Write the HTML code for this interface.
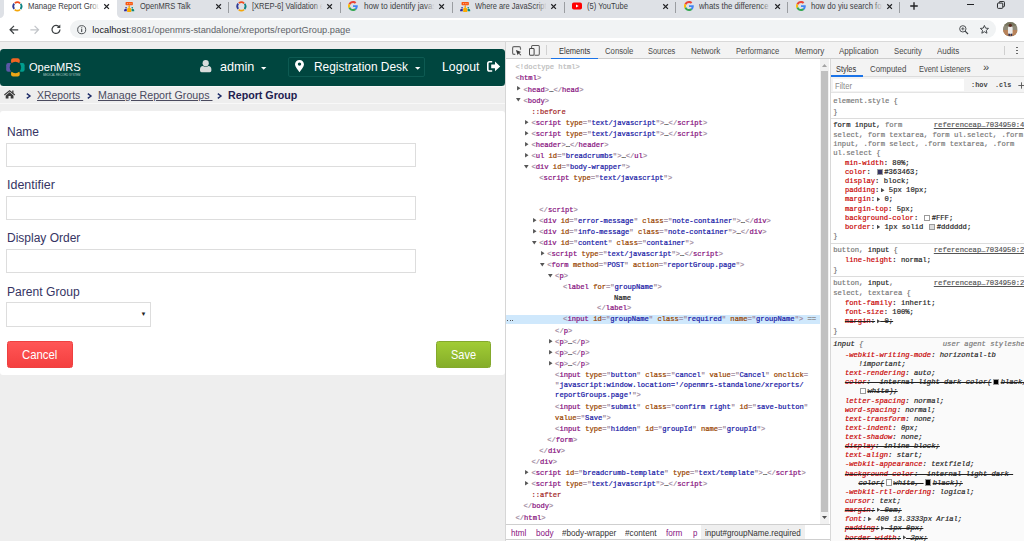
<!DOCTYPE html>
<html lang="en"><head><meta charset="utf-8"><title>Manage Report Groups</title>
<style>
*{box-sizing:border-box;margin:0;padding:0}
html,body{width:1024px;height:541px;overflow:hidden;background:#fff}
body{position:relative;font-family:"Liberation Sans",Arial,sans-serif;color:#333}
.abs{position:absolute}
.t{position:absolute;white-space:pre;line-height:1}
/* ---------- browser chrome ---------- */
#tabstrip{left:0;top:0;width:1024px;height:18px;background:#dee1e6}
#acttab{left:3.8px;top:0;width:113.3px;height:18px;background:#fff}
.foot{width:5px;height:5px;background:#fff;top:12.6px}
.foot i{display:block;width:5px;height:5px;background:#dee1e6}
.tabt{font-size:8.1px;letter-spacing:-0.2px;color:#3c4043;top:2.9px;overflow:hidden}
.tabx{font-size:9px;color:#202124;top:3.5px;font-weight:bold}
.tsep{top:1.6px;width:1px;height:11px;background:#9a9da1}
#toolbar{left:0;top:17.5px;width:1024px;height:23px;background:#fff}
#omni{left:70px;top:20.4px;width:926px;height:17.7px;border-radius:9px;background:#f1f3f4}
#url{left:92.2px;top:26px;font-size:9.25px;color:#5f6368}
#url b{font-weight:normal;color:#202124}
#tbline{left:0;top:40.5px;width:1024px;height:1px;background:#d9d9d9}
/* ---------- page ---------- */
#pagebg{left:0;top:41.5px;width:505px;height:500px;background:#eeeeee}
#hdr{left:0;top:48.7px;width:505.3px;height:37px;background:#00463f;border-radius:3.5px}
.hw{color:#fff}
#crumbs{left:0;top:86.2px;width:505px;height:17.8px;background:#eeeeee;border-top:1px solid #f8f8f8;border-bottom:1px solid #f8f8f8}
.cr{font-size:11.7px;color:#363463;top:89.6px}
.cr.u{text-decoration:underline;color:#4a4a5e}
#content{left:0;top:111px;width:505.3px;height:263.6px;background:#fff;border-radius:3px}
.lbl{font-size:12px;color:#363463;left:7px}
.inp{left:6px;width:410px;height:24px;border:1px solid #ddd;background:#fff}
.btn{top:341.2px;height:26.4px;border-radius:2.5px;color:#fff;font-size:12.6px;text-align:center;line-height:26px}
#cancel{left:6.5px;width:66px;background:linear-gradient(#ff5656,#f43f3f);border:1px solid #ee4040}
#save{left:436.2px;width:55px;background:linear-gradient(#a1cc35,#85ad29);border:1px solid #84a92c}
#pgedge{left:505.3px;top:41.5px;width:1px;height:500px;background:#d6d6d6}

.fade{position:absolute;top:0px;width:12px;height:14px}
svg{position:absolute;overflow:visible}

.hd{font-size:12px;color:#fff;top:61.2px}
#regbox{left:288.4px;top:56.6px;width:136.2px;height:20.2px;border:1px solid #0d5a52;border-radius:2px}

#dtbar{left:506px;top:41.5px;width:518px;height:17px;background:#f3f3f3;border-bottom:1px solid #cdcdcd}
#dtleft{left:505.3px;top:41.5px;width:1px;height:500px;background:#d6d6d6}
#stbar{left:830.5px;top:59px;width:194px;height:17.6px;background:#f3f3f3;border-bottom:1px solid #dcdcdc}
#stfilt{left:830.5px;top:76.6px;width:194px;height:16.8px;background:#f3f3f3;border-bottom:1px solid #e4e4e4}
#stinp{left:832.6px;top:78.8px;width:131.6px;height:12.6px;background:#fff}
#split{left:829.6px;top:59px;width:1px;height:482px;background:#d8d8d8}
#sbtrack{left:820.4px;top:59px;width:8.6px;height:465.6px;background:#f1f1f1}
#sbthumb{left:821px;top:70.6px;width:7.4px;height:441.4px;background:#c1c1c1}
#elcr{left:506px;top:523.9px;width:323.6px;height:15.9px;background:#fff;border-top:1px solid #cfcfcf;border-bottom:1px solid #cfcfcf}
#elcrsel{left:700.5px;top:525.1px;width:104.4px;height:13.6px;background:#efefef}
.mono{font-family:"Liberation Mono",monospace}

.ln{position:absolute;white-space:pre;font-family:"Liberation Mono",monospace;font-size:7.155px;line-height:11px;height:11px;color:#222;-webkit-text-stroke:0.22px currentColor}
.ln i{font-style:normal}
.b{color:#a08a9e}.tg{color:#881280}.an{color:#994500}.av{color:#1a1aa6}.dc{color:#bdbdbd}.ps{color:#a52a2a}.gy{color:#8a8a8a}
#selrow{left:506px;top:314.5px;width:314.4px;height:9.8px;background:#cfe8fc}
#treeclip{left:506px;top:59px;width:314.4px;height:465.6px;overflow:hidden}

#stclip{left:830.5px;top:93px;width:193.5px;height:448px;overflow:hidden;background:#fff}
.sl{position:absolute;white-space:pre;font-family:"Liberation Mono",monospace;font-size:7.19px;line-height:9.2px;height:9.2px;color:#222;-webkit-text-stroke:0.18px currentColor}
.sl.it{font-style:italic}
.pn{color:#c80000}.sg{color:#777}.sm{color:#222}.lk{color:#555;text-decoration:underline;text-decoration-thickness:0.6px}
.st{text-decoration:line-through;text-decoration-color:#222;text-decoration-thickness:0.7px}
.sw{display:inline-block;width:6.2px;height:6.2px;border:0.7px solid #9a9a9a;vertical-align:-0.9px;margin:0 1.5px 0 1.4px}
.tri{display:inline-block;width:3.5px;height:4.6px;background:#4a4a4a;clip-path:polygon(0 0,100% 50%,0 100%);margin:0 0 0 1.6px;vertical-align:-0.2px}
.sep{position:absolute;left:0;width:194px;height:1px;background:#dcdcdc}
#uabg{left:0;top:244.6px;width:194px;height:210px;background:#fafafa}
</style></head>
<body>

<div id="tabstrip" class="abs"></div>
<div id="acttab" class="abs"></div><div class="abs foot" style="left:117.1px"><i style="border-bottom-left-radius:4.5px"></i></div><div class="abs foot" style="left:-1.2px"><i style="border-bottom-right-radius:4.5px"></i></div>
<div id="toolbar" class="abs"></div>
<div id="omni" class="abs"></div>
<div id="tbline" class="abs"></div>
<div id="url" class="t"><b>localhost</b>:8081/openmrs-standalone/xreports/reportGroup.page</div>

<div id="pagebg" class="abs"></div>
<div id="hdr" class="abs"></div>
<div id="crumbs" class="abs"></div>
<div id="content" class="abs"></div>
<div id="pgedge" class="abs"></div>
<div class="t" style="left:6.6px;top:126.00px;font-size:12px;color:#363463;transform:scaleX(0.9997);transform-origin:0 50%;">Name</div>
<div class="abs inp" style="top:143px"></div>
<div class="t" style="left:6.6px;top:178.80px;font-size:12px;color:#363463;transform:scaleX(1.0386);transform-origin:0 50%;">Identifier</div>
<div class="abs inp" style="top:196.2px"></div>
<div class="t" style="left:6.6px;top:232.40px;font-size:12px;color:#363463;transform:scaleX(0.9993);transform-origin:0 50%;">Display Order</div>
<div class="abs inp" style="top:248.8px"></div>
<div class="t" style="left:6.6px;top:285.50px;font-size:12px;color:#363463;transform:scaleX(1.0078);transform-origin:0 50%;">Parent Group</div>
<div class="abs inp" style="top:302px;width:145.2px;height:25px"></div>
<div class="t" style="left:140.5px;top:311px;font-size:6px;color:#222">&#9660;</div>
<div id="cancel" class="abs btn"></div><div class="t" style="left:21.8px;top:348.50px;font-size:12.2px;color:#fff;transform:scaleX(0.9295);transform-origin:0 50%;">Cancel</div>
<div id="save" class="abs btn"></div><div class="t" style="left:451.2px;top:348.50px;font-size:12.2px;color:#fff;transform:scaleX(0.8990);transform-origin:0 50%;">Save</div>
<svg style="left:12.0px;top:1.1px" width="10.8" height="10.8" viewBox="0 0 10 10"><circle cx="5" cy="5" r="3.85" fill="none" stroke="#f04a1c" stroke-width="1.55" stroke-dasharray="5.20 18.99" transform="rotate(-129 5 5)"/><circle cx="5" cy="5" r="3.85" fill="none" stroke="#0c8282" stroke-width="1.55" stroke-dasharray="5.20 18.99" transform="rotate(-39 5 5)"/><circle cx="5" cy="5" r="3.85" fill="none" stroke="#f4a60a" stroke-width="1.55" stroke-dasharray="5.20 18.99" transform="rotate(51 5 5)"/><circle cx="5" cy="5" r="3.85" fill="none" stroke="#2f3a96" stroke-width="1.55" stroke-dasharray="5.20 18.99" transform="rotate(141 5 5)"/></svg><div class="abs" style="left:27.8px;top:0;width:74px;height:17px;overflow:hidden"><div class="t" style="left:0;top:1.9px;font-size:8.8px;color:#3c4043;transform:scaleX(0.8820);transform-origin:0 50%">Manage Report Groups</div></div><div class="fade" style="left:89.5px;background:linear-gradient(90deg,rgba(255,255,255,0),rgba(255,255,255,1) 80%)"></div><svg style="left:103.7px;top:3.9px" width="5.2" height="5.2" viewBox="0 0 10 10"><path d="M0.5 0.5 L9.5 9.5 M9.5 0.5 L0.5 9.5" stroke="#202124" stroke-width="2.3" fill="none"/></svg><svg style="left:124.3px;top:1.7px" width="10.3" height="10.3" viewBox="0 0 10 10"><rect x="1.5" y="0" width="7.1" height="3.2" rx="0.7" fill="#f9560e"/><circle cx="3.3" cy="1.65" r="0.45" fill="#fff"/><circle cx="5.05" cy="1.65" r="0.45" fill="#fff"/><circle cx="6.8" cy="1.65" r="0.45" fill="#fff"/><rect x="4.7" y="3.1" width="0.7" height="1.2" fill="#f9560e"/><circle cx="2.0" cy="5.7" r="0.8" fill="#2e2a9a"/><path d="M0.1 9.1 V7.9 Q0.1 6.7 1.3 6.7 H2.7 V9.1 Z" fill="#2e2a9a"/><circle cx="8.0" cy="5.7" r="0.8" fill="#0b8a7a"/><path d="M9.9 9.1 V7.9 Q9.9 6.7 8.7 6.7 H7.3 V9.1 Z" fill="#0b8a7a"/><circle cx="5.05" cy="4.9" r="0.9" fill="#fbab00"/><path d="M3.1 9.7 V7 Q3.1 5.9 4.2 5.9 H5.9 Q7 5.9 7 7 V9.7 Z" fill="#fbab00"/></svg><div class="abs" style="left:139.8px;top:0;width:74px;height:17px;overflow:hidden"><div class="t" style="left:0;top:1.9px;font-size:8.8px;color:#3c4043;transform:scaleX(0.8574);transform-origin:0 50%">OpenMRS Talk</div></div><svg style="left:215.6px;top:3.9px" width="5.2" height="5.2" viewBox="0 0 10 10"><path d="M0.5 0.5 L9.5 9.5 M9.5 0.5 L0.5 9.5" stroke="#202124" stroke-width="2.3" fill="none"/></svg><div class="abs tsep" style="left:227.8px"></div><svg style="left:235.8px;top:1.1px" width="10.8" height="10.8" viewBox="0 0 10 10"><circle cx="5" cy="5" r="3.85" fill="none" stroke="#f04a1c" stroke-width="1.55" stroke-dasharray="5.20 18.99" transform="rotate(-129 5 5)"/><circle cx="5" cy="5" r="3.85" fill="none" stroke="#0c8282" stroke-width="1.55" stroke-dasharray="5.20 18.99" transform="rotate(-39 5 5)"/><circle cx="5" cy="5" r="3.85" fill="none" stroke="#f4a60a" stroke-width="1.55" stroke-dasharray="5.20 18.99" transform="rotate(51 5 5)"/><circle cx="5" cy="5" r="3.85" fill="none" stroke="#2f3a96" stroke-width="1.55" stroke-dasharray="5.20 18.99" transform="rotate(141 5 5)"/></svg><div class="abs" style="left:251.7px;top:0;width:74px;height:17px;overflow:hidden"><div class="t" style="left:0;top:1.9px;font-size:8.8px;color:#3c4043;transform:scaleX(0.8558);transform-origin:0 50%">[XREP-6] Validation e</div></div><div class="fade" style="left:313.2px;background:linear-gradient(90deg,rgba(222,225,230,0),rgba(222,225,230,1) 80%)"></div><svg style="left:327.4px;top:3.9px" width="5.2" height="5.2" viewBox="0 0 10 10"><path d="M0.5 0.5 L9.5 9.5 M9.5 0.5 L0.5 9.5" stroke="#202124" stroke-width="2.3" fill="none"/></svg><div class="abs tsep" style="left:339.6px"></div><svg style="left:348.4px;top:1.2px" width="10" height="10" viewBox="0 0 48 48"><path fill="#EA4335" d="M24 9.5c3.54 0 6.71 1.22 9.21 3.6l6.85-6.85C35.9 2.38 30.47 0 24 0 14.62 0 6.51 5.38 2.56 13.22l7.98 6.19C12.43 13.72 17.74 9.5 24 9.5z"/><path fill="#4285F4" d="M46.98 24.55c0-1.57-.15-3.09-.38-4.55H24v9.02h12.94c-.58 2.96-2.26 5.48-4.78 7.18l7.73 6c4.51-4.18 7.09-10.36 7.09-17.65z"/><path fill="#FBBC05" d="M10.53 28.59c-.48-1.45-.76-2.99-.76-4.59s.27-3.14.76-4.59l-7.98-6.19C.92 16.46 0 20.12 0 24c0 3.88.92 7.54 2.56 10.78l7.97-6.19z"/><path fill="#34A853" d="M24 48c6.48 0 11.93-2.13 15.89-5.81l-7.73-6c-2.15 1.45-4.92 2.3-8.16 2.3-6.26 0-11.57-4.22-13.47-9.91l-7.98 6.19C6.51 42.62 14.62 48 24 48z"/></svg><div class="abs" style="left:363.6px;top:0;width:74px;height:17px;overflow:hidden"><div class="t" style="left:0;top:1.9px;font-size:8.8px;color:#3c4043;transform:scaleX(0.9152);transform-origin:0 50%">how to identify javas</div></div><div class="fade" style="left:425.2px;background:linear-gradient(90deg,rgba(222,225,230,0),rgba(222,225,230,1) 80%)"></div><svg style="left:439.4px;top:3.9px" width="5.2" height="5.2" viewBox="0 0 10 10"><path d="M0.5 0.5 L9.5 9.5 M9.5 0.5 L0.5 9.5" stroke="#202124" stroke-width="2.3" fill="none"/></svg><div class="abs tsep" style="left:451.6px"></div><svg style="left:459.9px;top:1.7px" width="10.3" height="10.3" viewBox="0 0 10 10"><rect x="1.5" y="0" width="7.1" height="3.2" rx="0.7" fill="#f9560e"/><circle cx="3.3" cy="1.65" r="0.45" fill="#fff"/><circle cx="5.05" cy="1.65" r="0.45" fill="#fff"/><circle cx="6.8" cy="1.65" r="0.45" fill="#fff"/><rect x="4.7" y="3.1" width="0.7" height="1.2" fill="#f9560e"/><circle cx="2.0" cy="5.7" r="0.8" fill="#2e2a9a"/><path d="M0.1 9.1 V7.9 Q0.1 6.7 1.3 6.7 H2.7 V9.1 Z" fill="#2e2a9a"/><circle cx="8.0" cy="5.7" r="0.8" fill="#0b8a7a"/><path d="M9.9 9.1 V7.9 Q9.9 6.7 8.7 6.7 H7.3 V9.1 Z" fill="#0b8a7a"/><circle cx="5.05" cy="4.9" r="0.9" fill="#fbab00"/><path d="M3.1 9.7 V7 Q3.1 5.9 4.2 5.9 H5.9 Q7 5.9 7 7 V9.7 Z" fill="#fbab00"/></svg><div class="abs" style="left:475.4px;top:0;width:74px;height:17px;overflow:hidden"><div class="t" style="left:0;top:1.9px;font-size:8.8px;color:#3c4043;transform:scaleX(0.8458);transform-origin:0 50%">Where are JavaScript</div></div><div class="fade" style="left:537.0px;background:linear-gradient(90deg,rgba(222,225,230,0),rgba(222,225,230,1) 80%)"></div><svg style="left:551.2px;top:3.9px" width="5.2" height="5.2" viewBox="0 0 10 10"><path d="M0.5 0.5 L9.5 9.5 M9.5 0.5 L0.5 9.5" stroke="#202124" stroke-width="2.3" fill="none"/></svg><div class="abs tsep" style="left:563.5px"></div><svg style="left:572.2px;top:1.2px" width="10" height="10" viewBox="0 0 10 10"><rect x="0" y="1.5" width="10" height="7" rx="1.8" fill="#ff0000"/><path d="M4 3.4 L6.7 5 L4 6.6 Z" fill="#fff"/></svg><div class="abs" style="left:587.4px;top:0;width:74px;height:17px;overflow:hidden"><div class="t" style="left:0;top:1.9px;font-size:8.8px;color:#3c4043;transform:scaleX(0.8609);transform-origin:0 50%">(5) YouTube</div></div><svg style="left:663.1px;top:3.9px" width="5.2" height="5.2" viewBox="0 0 10 10"><path d="M0.5 0.5 L9.5 9.5 M9.5 0.5 L0.5 9.5" stroke="#202124" stroke-width="2.3" fill="none"/></svg><div class="abs tsep" style="left:675.4px"></div><svg style="left:684.1px;top:1.2px" width="10" height="10" viewBox="0 0 48 48"><path fill="#EA4335" d="M24 9.5c3.54 0 6.71 1.22 9.21 3.6l6.85-6.85C35.9 2.38 30.47 0 24 0 14.62 0 6.51 5.38 2.56 13.22l7.98 6.19C12.43 13.72 17.74 9.5 24 9.5z"/><path fill="#4285F4" d="M46.98 24.55c0-1.57-.15-3.09-.38-4.55H24v9.02h12.94c-.58 2.96-2.26 5.48-4.78 7.18l7.73 6c4.51-4.18 7.09-10.36 7.09-17.65z"/><path fill="#FBBC05" d="M10.53 28.59c-.48-1.45-.76-2.99-.76-4.59s.27-3.14.76-4.59l-7.98-6.19C.92 16.46 0 20.12 0 24c0 3.88.92 7.54 2.56 10.78l7.97-6.19z"/><path fill="#34A853" d="M24 48c6.48 0 11.93-2.13 15.89-5.81l-7.73-6c-2.15 1.45-4.92 2.3-8.16 2.3-6.26 0-11.57-4.22-13.47-9.91l-7.98 6.19C6.51 42.62 14.62 48 24 48z"/></svg><div class="abs" style="left:699.3px;top:0;width:74px;height:17px;overflow:hidden"><div class="t" style="left:0;top:1.9px;font-size:8.8px;color:#3c4043;transform:scaleX(0.8842);transform-origin:0 50%">whats the difference b</div></div><div class="fade" style="left:760.9px;background:linear-gradient(90deg,rgba(222,225,230,0),rgba(222,225,230,1) 80%)"></div><svg style="left:775.1px;top:3.9px" width="5.2" height="5.2" viewBox="0 0 10 10"><path d="M0.5 0.5 L9.5 9.5 M9.5 0.5 L0.5 9.5" stroke="#202124" stroke-width="2.3" fill="none"/></svg><div class="abs tsep" style="left:787.3px"></div><svg style="left:796.0px;top:1.2px" width="10" height="10" viewBox="0 0 48 48"><path fill="#EA4335" d="M24 9.5c3.54 0 6.71 1.22 9.21 3.6l6.85-6.85C35.9 2.38 30.47 0 24 0 14.62 0 6.51 5.38 2.56 13.22l7.98 6.19C12.43 13.72 17.74 9.5 24 9.5z"/><path fill="#4285F4" d="M46.98 24.55c0-1.57-.15-3.09-.38-4.55H24v9.02h12.94c-.58 2.96-2.26 5.48-4.78 7.18l7.73 6c4.51-4.18 7.09-10.36 7.09-17.65z"/><path fill="#FBBC05" d="M10.53 28.59c-.48-1.45-.76-2.99-.76-4.59s.27-3.14.76-4.59l-7.98-6.19C.92 16.46 0 20.12 0 24c0 3.88.92 7.54 2.56 10.78l7.97-6.19z"/><path fill="#34A853" d="M24 48c6.48 0 11.93-2.13 15.89-5.81l-7.73-6c-2.15 1.45-4.92 2.3-8.16 2.3-6.26 0-11.57-4.22-13.47-9.91l-7.98 6.19C6.51 42.62 14.62 48 24 48z"/></svg><div class="abs" style="left:811.2px;top:0;width:74px;height:17px;overflow:hidden"><div class="t" style="left:0;top:1.9px;font-size:8.8px;color:#3c4043;transform:scaleX(0.8735);transform-origin:0 50%">how do yiu search for</div></div><div class="fade" style="left:872.8px;background:linear-gradient(90deg,rgba(222,225,230,0),rgba(222,225,230,1) 80%)"></div><svg style="left:887.0px;top:3.9px" width="5.2" height="5.2" viewBox="0 0 10 10"><path d="M0.5 0.5 L9.5 9.5 M9.5 0.5 L0.5 9.5" stroke="#202124" stroke-width="2.3" fill="none"/></svg><div class="abs tsep" style="left:899.2px"></div><svg style="left:910.3px;top:2.4px" width="8" height="8" viewBox="0 0 10 10"><path d="M5 0.3 V9.7 M0.3 5 H9.7" stroke="#202124" stroke-width="1.7" fill="none"/></svg><div class="abs" style="left:967px;top:4.3px;width:7.4px;height:1px;background:#202124"></div><svg style="left:997px;top:0.6px" width="8" height="8" viewBox="0 0 10 10"><rect x="0.6" y="2.6" width="6.6" height="6.6" rx="1" fill="#dee1e6" stroke="#202124" stroke-width="1.2"/><path d="M2.8 2.4 V1.6 Q2.8 0.7 3.8 0.7 H8.3 Q9.3 0.7 9.3 1.7 V6.2 Q9.3 7.2 8.3 7.2 H7.4" fill="none" stroke="#202124" stroke-width="1.2"/></svg><svg style="left:9px;top:24.5px" width="9.6" height="9.6" viewBox="0 0 10 10"><path d="M9.6 5 H1.4 M5.2 0.9 L1.1 5 L5.2 9.1" stroke="#3c4043" stroke-width="1.25" fill="none"/></svg><svg style="left:29.8px;top:24.5px" width="9.6" height="9.6" viewBox="0 0 10 10"><path d="M0.4 5 H8.6 M4.8 0.9 L8.9 5 L4.8 9.1" stroke="#c2c5c9" stroke-width="1.25" fill="none"/></svg><svg style="left:50.6px;top:24.2px" width="10" height="10" viewBox="0 0 10 10"><path d="M8.3 3.2 A4 4 0 1 0 9 5.6" stroke="#3c4043" stroke-width="1.25" fill="none"/><path d="M9.3 0.6 V4.1 H5.8 Z" fill="#3c4043"/></svg><svg style="left:76.6px;top:24.6px" width="9.4" height="9.4" viewBox="0 0 10 10"><circle cx="5" cy="5" r="4.3" fill="none" stroke="#3c4043" stroke-width="0.95"/><rect x="4.45" y="4.3" width="1.1" height="3.2" fill="#3c4043"/><rect x="4.45" y="2.5" width="1.1" height="1.1" fill="#3c4043"/></svg><svg style="left:958.6px;top:24.6px" width="9.6" height="9.6" viewBox="0 0 10 10"><circle cx="4" cy="4" r="3.3" fill="none" stroke="#3c4043" stroke-width="0.95"/><path d="M6.4 6.4 L9.4 9.4" stroke="#3c4043" stroke-width="1.2"/><path d="M2.3 4 H5.7 M4 2.3 V5.7" stroke="#3c4043" stroke-width="0.8"/></svg><svg style="left:979px;top:23.9px" width="10.8" height="10.8" viewBox="0 0 24 24"><path d="M12 3.2 L14.6 9.2 L21.1 9.8 L16.2 14.1 L17.7 20.5 L12 17.1 L6.3 20.5 L7.8 14.1 L2.9 9.8 L9.4 9.2 Z" fill="none" stroke="#3c4043" stroke-width="2.1" stroke-linejoin="round"/></svg><svg style="left:1002.6px;top:21.8px" width="14.6" height="14.6" viewBox="0 0 20 20"><defs><clipPath id="av"><circle cx="10" cy="10" r="10"/></clipPath></defs><g clip-path="url(#av)"><rect width="20" height="20" fill="#8f8a78"/><rect y="11" width="20" height="9" fill="#b9835a"/><rect x="0" y="0" width="20" height="5" fill="#77765f"/><rect x="6.8" y="6.5" width="6.4" height="10" rx="1.5" fill="#ecebea"/><circle cx="10" cy="4.6" r="2.2" fill="#5a2c22"/><rect x="7.5" y="16" width="2" height="3" fill="#27305a"/><rect x="10.5" y="16" width="2" height="3" fill="#27305a"/></g></svg><svg style="left:6.2px;top:57.8px" width="18.8" height="18.8" viewBox="0 0 20 20"><rect x="5.4" y="0.2" width="9.2" height="6" rx="2.2" fill="#f26522"/><rect x="13.8" y="5.4" width="6" height="9.2" rx="2.2" fill="#009d8e"/><rect x="5.4" y="13.8" width="9.2" height="6" rx="2.2" fill="#eea616"/><rect x="0.2" y="5.4" width="6" height="9.2" rx="2.2" fill="#5b57a6"/><circle cx="10" cy="10" r="6.1" fill="#00463f"/></svg><div class="t" style="left:28.7px;top:61.60px;font-size:11.4px;color:#fff;transform:scaleX(0.9733);transform-origin:0 50%;">OpenMRS</div><div class="t" style="left:42.5px;top:74.90px;font-size:2.6px;color:#b5ccc8;transform:scaleX(1.0756);transform-origin:0 50%;">MEDICAL RECORD SYSTEM</div><svg style="left:199.8px;top:60.2px" width="11.4" height="12.2" viewBox="0 0 11.4 12.2"><circle cx="5.7" cy="3.2" r="3.1" fill="#d9dcdb"/><path d="M0 10.6 V9.4 Q0 6.1 3 5.9 Q5.7 7.6 8.4 5.9 Q11.4 6.1 11.4 9.4 V10.6 Q11.4 12.2 9.8 12.2 H1.6 Q0 12.2 0 10.6 Z" fill="#d9dcdb"/></svg><div class="t" style="left:219.8px;top:60.90px;font-size:12.2px;color:#fff;transform:scaleX(1.0352);transform-origin:0 50%;">admin</div><svg style="left:261px;top:67.4px" width="5.4" height="2.7" viewBox="0 0 10 5"><path d="M0 0 H10 L5 5 Z" fill="#fff"/></svg><div id="regbox" class="abs"></div><svg style="left:295.2px;top:60.4px" width="9" height="12.2" viewBox="0 0 9 12.2"><path d="M4.5 0 C7 0 9 1.9 9 4.4 C9 6.8 6.2 9.6 4.5 12.2 C2.8 9.6 0 6.8 0 4.4 C0 1.9 2 0 4.5 0 Z" fill="#fff"/><circle cx="4.5" cy="4.1" r="1.7" fill="#00463f"/></svg><div class="t" style="left:314.0px;top:61.00px;font-size:12px;color:#fff;transform:scaleX(0.9925);transform-origin:0 50%;">Registration Desk</div><svg style="left:415.2px;top:67.4px" width="5.4" height="2.7" viewBox="0 0 10 5"><path d="M0 0 H10 L5 5 Z" fill="#fff"/></svg><div class="t" style="left:442.1px;top:61.00px;font-size:12px;color:#fff;transform:scaleX(1.0217);transform-origin:0 50%;">Logout</div><svg style="left:487.2px;top:61px" width="13.2" height="10.8" viewBox="0 0 13.2 10.8"><path d="M5.2 0.8 H2.6 Q0.8 0.8 0.8 2.6 V8.2 Q0.8 10 2.6 10 H5.2" fill="none" stroke="#fff" stroke-width="1.6"/><path d="M4.2 3.6 H8 V0.6 L13.2 5.4 L8 10.2 V7.2 H4.2 Z" fill="#fff"/></svg><svg style="left:4px;top:90.4px" width="11.2" height="8.6" viewBox="0 0 11.2 8.6"><path d="M5.6 0 L11.2 4.6 L10.5 5.4 L5.6 1.4 L0.7 5.4 L0 4.6 Z" fill="#3a3a3a"/><path d="M5.6 2.3 L9.5 5.5 V8.6 H6.7 V6 H4.5 V8.6 H1.7 V5.5 Z" fill="#3a3a3a"/><rect x="8.2" y="0.5" width="1.3" height="2.6" fill="#3a3a3a"/></svg><svg style="left:25.8px;top:93.3px" width="5" height="6" viewBox="0 0 5 6"><path d="M0.8 0.6 L4 3 L0.8 5.4" fill="none" stroke="#1b2a66" stroke-width="1.4"/></svg><div class="t" style="left:37.0px;top:89.85px;font-size:10.9px;color:#4a4a5e;transform:scaleX(0.9532);transform-origin:0 50%;text-decoration:underline;">XReports </div><svg style="left:87.2px;top:93.3px" width="5" height="6" viewBox="0 0 5 6"><path d="M0.8 0.6 L4 3 L0.8 5.4" fill="none" stroke="#1b2a66" stroke-width="1.4"/></svg><div class="t" style="left:98.4px;top:89.85px;font-size:10.9px;color:#4a4a5e;transform:scaleX(0.9800);transform-origin:0 50%;text-decoration:underline;">Manage Report Groups </div><svg style="left:216.8px;top:93.3px" width="5" height="6" viewBox="0 0 5 6"><path d="M0.8 0.6 L4 3 L0.8 5.4" fill="none" stroke="#1b2a66" stroke-width="1.4"/></svg><div class="t" style="left:228.4px;top:89.85px;font-size:10.9px;color:#22204f;transform:scaleX(0.9796);transform-origin:0 50%;font-weight:700;">Report Group</div><div id="dtbar" class="abs"></div><div id="stbar" class="abs"></div><div id="stfilt" class="abs"></div><div id="stinp" class="abs"></div><div id="split" class="abs"></div><div id="sbtrack" class="abs"></div><div id="sbthumb" class="abs"></div><svg style="left:822.2px;top:64.1px" width="5" height="3" viewBox="0 0 10 6"><path d="M0 6 L5 0 L10 6 Z" fill="#a3a3a3"/></svg><svg style="left:822.2px;top:516.2px" width="5" height="3" viewBox="0 0 10 6"><path d="M0 0 L5 6 L10 0 Z" fill="#505050"/></svg><div id="elcr" class="abs"></div><div id="elcrsel" class="abs"></div><svg style="left:512.2px;top:45.6px" width="10" height="10" viewBox="0 0 10 10"><path d="M8.5 3.7 V2 Q8.5 0.6 7.1 0.6 H2 Q0.6 0.6 0.6 2 V7 Q0.6 8.4 2 8.4 H3.3" fill="none" stroke="#6a6a6a" stroke-width="1.15"/><path d="M3.9 3.9 L9.2 5.9 L7.2 6.9 L9.3 9 L8.7 9.6 L6.6 7.5 L5.7 9.3 Z" fill="#383838"/></svg><svg style="left:529.2px;top:45.1px" width="10.8" height="10.7" viewBox="0 0 10.8 10.2" preserveAspectRatio="none"><path d="M2.6 3 V1.5 Q2.6 0.5 3.6 0.5 H9.3 Q10.3 0.5 10.3 1.5 V8.7 Q10.3 9.7 9.3 9.7 H5.6" fill="none" stroke="#5a5a5a" stroke-width="1"/><rect x="0.5" y="3.4" width="4.6" height="6.3" rx="0.8" fill="#f3f3f3" stroke="#444" stroke-width="1"/></svg><div class="abs" style="left:546.3px;top:45.4px;width:1.2px;height:9.8px;background:#d2d2d2"></div><div class="t" style="left:558.8px;top:46.85px;font-size:8.5px;color:#333;transform:scaleX(0.8834);transform-origin:0 50%;">Elements</div><div class="t" style="left:605.2px;top:46.85px;font-size:8.5px;color:#4a4a4a;transform:scaleX(0.9106);transform-origin:0 50%;">Console</div><div class="t" style="left:648.2px;top:46.85px;font-size:8.5px;color:#4a4a4a;transform:scaleX(0.8755);transform-origin:0 50%;">Sources</div><div class="t" style="left:691.2px;top:46.85px;font-size:8.5px;color:#4a4a4a;transform:scaleX(0.9399);transform-origin:0 50%;">Network</div><div class="t" style="left:736.2px;top:46.85px;font-size:8.5px;color:#4a4a4a;transform:scaleX(0.8899);transform-origin:0 50%;">Performance</div><div class="t" style="left:794.7px;top:46.85px;font-size:8.5px;color:#4a4a4a;transform:scaleX(0.9545);transform-origin:0 50%;">Memory</div><div class="t" style="left:839.2px;top:46.85px;font-size:8.5px;color:#4a4a4a;transform:scaleX(0.9475);transform-origin:0 50%;">Application</div><div class="t" style="left:894.2px;top:46.85px;font-size:8.5px;color:#4a4a4a;transform:scaleX(0.9054);transform-origin:0 50%;">Security</div><div class="t" style="left:937.2px;top:46.85px;font-size:8.5px;color:#4a4a4a;transform:scaleX(0.9439);transform-origin:0 50%;">Audits</div><div class="abs" style="left:551.2px;top:57.5px;width:46.5px;height:1.7px;background:#1a73e8"></div><div class="abs" style="left:1004px;top:45.6px;width:1px;height:9.6px;background:#cfcfcf"></div><div class="abs" style="left:1016.1px;top:46.6px;width:1.8px;height:1.8px;border-radius:1px;background:#555"></div><div class="abs" style="left:1016.1px;top:49.6px;width:1.8px;height:1.8px;border-radius:1px;background:#555"></div><div class="abs" style="left:1016.1px;top:52.6px;width:1.8px;height:1.8px;border-radius:1px;background:#555"></div><div class="t" style="left:836.4px;top:64.55px;font-size:8.5px;color:#333;transform:scaleX(0.8726);transform-origin:0 50%;">Styles</div><div class="t" style="left:869.5px;top:64.55px;font-size:8.5px;color:#4a4a4a;transform:scaleX(0.9256);transform-origin:0 50%;">Computed</div><div class="t" style="left:919.1px;top:64.55px;font-size:8.5px;color:#4a4a4a;transform:scaleX(0.8773);transform-origin:0 50%;">Event Listeners</div><div class="t" style="left:982.6px;top:62.80px;font-size:10px;color:#444;transform:scaleX(1.1146);transform-origin:0 50%;">»</div><div class="abs" style="left:830.5px;top:75.4px;width:32.6px;height:1.6px;background:#1a73e8"></div><div class="t" style="left:835.4px;top:81.70px;font-size:8.4px;color:#8a8a8a;transform:scaleX(0.9107);transform-origin:0 50%;">Filter</div><div class="t" style="left:971.2px;top:82.00px;font-size:7.2px;color:#444;transform:scaleX(0.9605);transform-origin:0 50%;font-family:'Liberation Mono',monospace;font-weight:700;">:hov</div><div class="t" style="left:995.0px;top:82.00px;font-size:7.2px;color:#444;transform:scaleX(0.9373);transform-origin:0 50%;font-family:'Liberation Mono',monospace;font-weight:700;">.cls</div><svg style="left:1018.2px;top:82.4px" width="7" height="7" viewBox="0 0 10 10"><path d="M5 0.5 V9.5 M0.5 5 H9.5" stroke="#555" stroke-width="1.3"/></svg><div class="t" style="left:510.7px;top:528.65px;font-size:8.5px;color:#881280;transform:scaleX(0.9590);transform-origin:0 50%;">html</div><div class="t" style="left:535.5px;top:528.65px;font-size:8.5px;color:#881280;transform:scaleX(0.9548);transform-origin:0 50%;">body</div><div class="t" style="left:562.3px;top:528.65px;font-size:8.5px;color:#333;transform:scaleX(0.9559);transform-origin:0 50%;">#body-wrapper</div><div class="t" style="left:625.4px;top:528.65px;font-size:8.5px;color:#333;transform:scaleX(0.9690);transform-origin:0 50%;">#content</div><div class="t" style="left:665.5px;top:528.65px;font-size:8.5px;color:#881280;transform:scaleX(0.9647);transform-origin:0 50%;">form</div><div class="t" style="left:692.6px;top:528.65px;font-size:8.5px;color:#881280;transform:scaleX(0.9306);transform-origin:0 50%;">p</div><div class="t" style="left:705.0px;top:528.65px;font-size:8.5px;color:#333;transform:scaleX(0.9474);transform-origin:0 50%;">input#groupName.required</div><div id="selrow" class="abs"></div><div id="treeclip" class="abs"><div class="ln" style="left:9.5px;top:3.40px"><span class="dc">&lt;!doctype html&gt;</span></div><div class="ln" style="left:9.5px;top:14.49px"><span class="b">&lt;</span><span class="tg">html</span><span class="b">&gt;</span></div><div class="ln" style="left:17.4px;top:25.58px"><span class="b">&lt;</span><span class="tg">head</span><span class="b">&gt;</span>…<span class="b">&lt;/</span><span class="tg">head</span><span class="b">&gt;</span></div><svg style="left:11.3px;top:27.48px" width="3.6" height="4.6" viewBox="0 0 6 8"><path d="M0 0 L6 4 L0 8 Z" fill="#555"/></svg><div class="ln" style="left:17.4px;top:36.67px"><span class="b">&lt;</span><span class="tg">body</span><span class="b">&gt;</span></div><svg style="left:10.0px;top:39.17px" width="4.6" height="3.6" viewBox="0 0 8 6"><path d="M0 0 L8 0 L4 6 Z" fill="#555"/></svg><div class="ln" style="left:25.4px;top:47.76px"><span class="ps">::before</span></div><div class="ln" style="left:25.4px;top:58.85px"><span class="b">&lt;</span><span class="tg">script</span> <span class="an">type</span><span class="b">="</span><span class="av">text/javascript</span><span class="b">"</span><span class="b">&gt;</span>…<span class="b">&lt;/</span><span class="tg">script</span><span class="b">&gt;</span></div><svg style="left:19.3px;top:60.75px" width="3.6" height="4.6" viewBox="0 0 6 8"><path d="M0 0 L6 4 L0 8 Z" fill="#555"/></svg><div class="ln" style="left:25.4px;top:69.94px"><span class="b">&lt;</span><span class="tg">script</span> <span class="an">type</span><span class="b">="</span><span class="av">text/javascript</span><span class="b">"</span><span class="b">&gt;</span>…<span class="b">&lt;/</span><span class="tg">script</span><span class="b">&gt;</span></div><svg style="left:19.3px;top:71.84px" width="3.6" height="4.6" viewBox="0 0 6 8"><path d="M0 0 L6 4 L0 8 Z" fill="#555"/></svg><div class="ln" style="left:25.4px;top:81.03px"><span class="b">&lt;</span><span class="tg">header</span><span class="b">&gt;</span>…<span class="b">&lt;/</span><span class="tg">header</span><span class="b">&gt;</span></div><svg style="left:19.3px;top:82.93px" width="3.6" height="4.6" viewBox="0 0 6 8"><path d="M0 0 L6 4 L0 8 Z" fill="#555"/></svg><div class="ln" style="left:25.4px;top:92.12px"><span class="b">&lt;</span><span class="tg">ul</span> <span class="an">id</span><span class="b">="</span><span class="av">breadcrumbs</span><span class="b">"</span><span class="b">&gt;</span>…<span class="b">&lt;/</span><span class="tg">ul</span><span class="b">&gt;</span></div><svg style="left:19.3px;top:94.02px" width="3.6" height="4.6" viewBox="0 0 6 8"><path d="M0 0 L6 4 L0 8 Z" fill="#555"/></svg><div class="ln" style="left:25.4px;top:103.21px"><span class="b">&lt;</span><span class="tg">div</span> <span class="an">id</span><span class="b">="</span><span class="av">body-wrapper</span><span class="b">"</span><span class="b">&gt;</span></div><svg style="left:18.0px;top:105.71px" width="4.6" height="3.6" viewBox="0 0 8 6"><path d="M0 0 L8 0 L4 6 Z" fill="#555"/></svg><div class="ln" style="left:33.3px;top:114.30px"><span class="b">&lt;</span><span class="tg">script</span> <span class="an">type</span><span class="b">="</span><span class="av">text/javascript</span><span class="b">"</span><span class="b">&gt;</span></div><div class="ln" style="left:33.3px;top:145.75px"><span class="b">&lt;/</span><span class="tg">script</span><span class="b">&gt;</span></div><div class="ln" style="left:33.3px;top:156.84px"><span class="b">&lt;</span><span class="tg">div</span> <span class="an">id</span><span class="b">="</span><span class="av">error-message</span><span class="b">"</span> <span class="an">class</span><span class="b">="</span><span class="av">note-container</span><span class="b">"</span><span class="b">&gt;</span>…<span class="b">&lt;/</span><span class="tg">div</span><span class="b">&gt;</span></div><svg style="left:27.2px;top:158.74px" width="3.6" height="4.6" viewBox="0 0 6 8"><path d="M0 0 L6 4 L0 8 Z" fill="#555"/></svg><div class="ln" style="left:33.3px;top:167.93px"><span class="b">&lt;</span><span class="tg">div</span> <span class="an">id</span><span class="b">="</span><span class="av">info-message</span><span class="b">"</span> <span class="an">class</span><span class="b">="</span><span class="av">note-container</span><span class="b">"</span><span class="b">&gt;</span>…<span class="b">&lt;/</span><span class="tg">div</span><span class="b">&gt;</span></div><svg style="left:27.2px;top:169.83px" width="3.6" height="4.6" viewBox="0 0 6 8"><path d="M0 0 L6 4 L0 8 Z" fill="#555"/></svg><div class="ln" style="left:33.3px;top:179.02px"><span class="b">&lt;</span><span class="tg">div</span> <span class="an">id</span><span class="b">="</span><span class="av">content</span><span class="b">"</span> <span class="an">class</span><span class="b">="</span><span class="av">container</span><span class="b">"</span><span class="b">&gt;</span></div><svg style="left:25.9px;top:181.52px" width="4.6" height="3.6" viewBox="0 0 8 6"><path d="M0 0 L8 0 L4 6 Z" fill="#555"/></svg><div class="ln" style="left:41.2px;top:190.11px"><span class="b">&lt;</span><span class="tg">script</span> <span class="an">type</span><span class="b">="</span><span class="av">text/javascript</span><span class="b">"</span><span class="b">&gt;</span>…<span class="b">&lt;/</span><span class="tg">script</span><span class="b">&gt;</span></div><svg style="left:35.1px;top:192.01px" width="3.6" height="4.6" viewBox="0 0 6 8"><path d="M0 0 L6 4 L0 8 Z" fill="#555"/></svg><div class="ln" style="left:41.2px;top:201.20px"><span class="b">&lt;</span><span class="tg">form</span> <span class="an">method</span><span class="b">="</span><span class="av">POST</span><span class="b">"</span> <span class="an">action</span><span class="b">="</span><span class="av">reportGroup.page</span><span class="b">"</span><span class="b">&gt;</span></div><svg style="left:33.8px;top:203.70px" width="4.6" height="3.6" viewBox="0 0 8 6"><path d="M0 0 L8 0 L4 6 Z" fill="#555"/></svg><div class="ln" style="left:49.1px;top:212.29px"><span class="b">&lt;</span><span class="tg">p</span><span class="b">&gt;</span></div><svg style="left:41.8px;top:214.79px" width="4.6" height="3.6" viewBox="0 0 8 6"><path d="M0 0 L8 0 L4 6 Z" fill="#555"/></svg><div class="ln" style="left:57.1px;top:223.38px"><span class="b">&lt;</span><span class="tg">label</span> <span class="an">for</span><span class="b">="</span><span class="av">groupName</span><span class="b">"</span><span class="b">&gt;</span></div><div class="ln" style="left:107.9px;top:234.05px">Name</div><div class="ln" style="left:91.1px;top:244.45px"><span class="b">&lt;/</span><span class="tg">label</span><span class="b">&gt;</span></div><div class="ln" style="left:57.1px;top:255.45px"><span class="b">&lt;</span><span class="tg">input</span> <span class="an">id</span><span class="b">="</span><span class="av">groupName</span><span class="b">"</span> <span class="an">class</span><span class="b">="</span><span class="av">required</span><span class="b">"</span> <span class="an">name</span><span class="b">="</span><span class="av">groupName</span><span class="b">"</span><span class="b">&gt;</span><span class="gy"> == $0</span></div><div class="ln" style="left:49.1px;top:266.54px"><span class="b">&lt;/</span><span class="tg">p</span><span class="b">&gt;</span></div><div class="ln" style="left:49.1px;top:277.63px"><span class="b">&lt;</span><span class="tg">p</span><span class="b">&gt;</span>…<span class="b">&lt;/</span><span class="tg">p</span><span class="b">&gt;</span></div><svg style="left:43.0px;top:279.53px" width="3.6" height="4.6" viewBox="0 0 6 8"><path d="M0 0 L6 4 L0 8 Z" fill="#555"/></svg><div class="ln" style="left:49.1px;top:288.72px"><span class="b">&lt;</span><span class="tg">p</span><span class="b">&gt;</span>…<span class="b">&lt;/</span><span class="tg">p</span><span class="b">&gt;</span></div><svg style="left:43.0px;top:290.62px" width="3.6" height="4.6" viewBox="0 0 6 8"><path d="M0 0 L6 4 L0 8 Z" fill="#555"/></svg><div class="ln" style="left:49.1px;top:299.81px"><span class="b">&lt;</span><span class="tg">p</span><span class="b">&gt;</span>…<span class="b">&lt;/</span><span class="tg">p</span><span class="b">&gt;</span></div><svg style="left:43.0px;top:301.71px" width="3.6" height="4.6" viewBox="0 0 6 8"><path d="M0 0 L6 4 L0 8 Z" fill="#555"/></svg><div class="ln" style="left:49.1px;top:310.90px"><span class="b">&lt;</span><span class="tg">input</span> <span class="an">type</span><span class="b">="</span><span class="av">button</span><span class="b">"</span> <span class="an">class</span><span class="b">="</span><span class="av">cancel</span><span class="b">"</span> <span class="an">value</span><span class="b">="</span><span class="av">Cancel</span><span class="b">"</span> <span class="an">onclick</span><span class="b">=</span></div><div class="ln" style="left:49.1px;top:321.35px"><span class="b">"</span><span class="av">javascript:window.location='/openmrs-standalone/xreports/</span></div><div class="ln" style="left:49.1px;top:331.35px"><span class="av">reportGroups.page'</span><span class="b">"&gt;</span></div><div class="ln" style="left:49.1px;top:342.95px"><span class="b">&lt;</span><span class="tg">input</span> <span class="an">type</span><span class="b">="</span><span class="av">submit</span><span class="b">"</span> <span class="an">class</span><span class="b">="</span><span class="av">confirm right</span><span class="b">"</span> <span class="an">id</span><span class="b">="</span><span class="av">save-button</span><span class="b">"</span></div><div class="ln" style="left:49.1px;top:353.60px"><span class="an">value</span><span class="b">="</span><span class="av">Save</span><span class="b">"&gt;</span></div><div class="ln" style="left:49.1px;top:364.85px"><span class="b">&lt;</span><span class="tg">input</span> <span class="an">type</span><span class="b">="</span><span class="av">hidden</span><span class="b">"</span> <span class="an">id</span><span class="b">="</span><span class="av">groupId</span><span class="b">"</span> <span class="an">name</span><span class="b">="</span><span class="av">groupId</span><span class="b">"</span><span class="b">&gt;</span></div><div class="ln" style="left:41.2px;top:375.94px"><span class="b">&lt;/</span><span class="tg">form</span><span class="b">&gt;</span></div><div class="ln" style="left:33.3px;top:387.03px"><span class="b">&lt;/</span><span class="tg">div</span><span class="b">&gt;</span></div><div class="ln" style="left:25.4px;top:398.12px"><span class="b">&lt;/</span><span class="tg">div</span><span class="b">&gt;</span></div><div class="ln" style="left:25.4px;top:409.21px"><span class="b">&lt;</span><span class="tg">script</span> <span class="an">id</span><span class="b">="</span><span class="av">breadcrumb-template</span><span class="b">"</span> <span class="an">type</span><span class="b">="</span><span class="av">text/template</span><span class="b">"</span><span class="b">&gt;</span>…<span class="b">&lt;/</span><span class="tg">script</span><span class="b">&gt;</span></div><svg style="left:19.3px;top:411.11px" width="3.6" height="4.6" viewBox="0 0 6 8"><path d="M0 0 L6 4 L0 8 Z" fill="#555"/></svg><div class="ln" style="left:25.4px;top:420.30px"><span class="b">&lt;</span><span class="tg">script</span> <span class="an">type</span><span class="b">="</span><span class="av">text/javascript</span><span class="b">"</span><span class="b">&gt;</span>…<span class="b">&lt;/</span><span class="tg">script</span><span class="b">&gt;</span></div><svg style="left:19.3px;top:422.20px" width="3.6" height="4.6" viewBox="0 0 6 8"><path d="M0 0 L6 4 L0 8 Z" fill="#555"/></svg><div class="ln" style="left:25.4px;top:431.39px"><span class="ps">::after</span></div><div class="ln" style="left:17.4px;top:442.48px"><span class="b">&lt;/</span><span class="tg">body</span><span class="b">&gt;</span></div><div class="ln" style="left:9.5px;top:453.57px"><span class="b">&lt;/</span><span class="tg">html</span><span class="b">&gt;</span></div></div><div class="abs" style="left:507.4px;top:319.9px;width:1.1px;height:1.1px;background:#555"></div><div class="abs" style="left:509.6px;top:319.9px;width:1.1px;height:1.1px;background:#555"></div><div class="abs" style="left:511.8px;top:319.9px;width:1.1px;height:1.1px;background:#555"></div><div id="stclip" class="abs"><div id="uabg" class="abs"></div><div class="sl " style="left:2.7px;top:4.20px"><span class="sg">element.style {</span></div><div class="sl " style="left:2.7px;top:14.50px"><span class="sg">}</span></div><div class="sep" style="top:25.3px"></div><div class="sl " style="left:2.7px;top:28.40px"><span class="sm">form input,</span><span class="sg"> form</span></div><div class="sl" style="left:103.3px;top:28.40px"><span class="lk">referenceap…7034950:4</span></div><div class="sl " style="left:2.7px;top:37.55px"><span class="sg">select, form textarea, form ul.select, .form</span></div><div class="sl " style="left:2.7px;top:46.70px"><span class="sg">input, .form select, .form textarea, .form</span></div><div class="sl " style="left:2.7px;top:55.85px"><span class="sg">ul.select {</span></div><div class="sl " style="left:14.4px;top:65.80px"><span class="pn">min-width</span><span class="sm">: 80%;</span></div><div class="sl " style="left:14.4px;top:74.97px"><span class="pn">color</span><span class="sm">: <span class="sw" style="background:#363463"></span>#363463;</span></div><div class="sl " style="left:14.4px;top:84.14px"><span class="pn">display</span><span class="sm">: block;</span></div><div class="sl " style="left:14.4px;top:93.31px"><span class="pn">padding</span><span class="sm">:<span class="tri"></span> 5px 10px;</span></div><div class="sl " style="left:14.4px;top:102.48px"><span class="pn">margin</span><span class="sm">:<span class="tri"></span> 0;</span></div><div class="sl " style="left:14.4px;top:111.65px"><span class="pn">margin-top</span><span class="sm">: 5px;</span></div><div class="sl " style="left:14.4px;top:120.82px"><span class="pn">background-color</span><span class="sm">: <span class="sw" style="background:#fff"></span>#FFF;</span></div><div class="sl " style="left:14.4px;top:129.99px"><span class="pn">border</span><span class="sm">:<span class="tri"></span> 1px solid <span class="sw" style="background:#dddddd"></span>#dddddd;</span></div><div class="sl " style="left:2.7px;top:139.30px"><span class="sg">}</span></div><div class="sep" style="top:150.0px"></div><div class="sl " style="left:2.7px;top:153.00px"><span class="sg">button, </span><span class="sm">input</span><span class="sg"> {</span></div><div class="sl" style="left:103.3px;top:153.00px"><span class="lk">referenceap…7034950:2</span></div><div class="sl " style="left:14.4px;top:163.40px"><span class="pn">line-height</span><span class="sm">: normal;</span></div><div class="sl " style="left:2.7px;top:172.90px"><span class="sg">}</span></div><div class="sep" style="top:183.4px"></div><div class="sl " style="left:2.7px;top:186.40px"><span class="sg">button, </span><span class="sm">input</span><span class="sg">,</span></div><div class="sl" style="left:103.3px;top:186.40px"><span class="lk">referenceap…7034950:2</span></div><div class="sl " style="left:2.7px;top:195.70px"><span class="sg">select, textarea {</span></div><div class="sl " style="left:14.4px;top:205.60px"><span class="pn">font-family</span><span class="sm">: inherit;</span></div><div class="sl " style="left:14.4px;top:214.80px"><span class="pn">font-size</span><span class="sm">: 100%;</span></div><div class="sl " style="left:14.4px;top:224.40px"><span class="st"><span class="pn">margin</span><span class="sm">:<span class="tri"></span> 0;</span></span></div><div class="sl " style="left:2.7px;top:233.50px"><span class="sg">}</span></div><div class="sep" style="top:244.2px"></div><div class="sl it" style="left:2.7px;top:247.00px"><span class="sm">input</span><span class="sg"> {</span></div><div class="sl it" style="left:112.3px;top:247.00px"><span class="sg">user agent stylesheet</span></div><div class="sl it" style="left:14.4px;top:257.70px"><span class="pn">-webkit-writing-mode</span><span class="sm">: horizontal-tb</span></div><div class="sl it" style="left:27.9px;top:266.80px"><span class="sm">!important;</span></div><div class="sl it" style="left:14.4px;top:275.90px"><span class="pn">text-rendering</span><span class="sm">: auto;</span></div><div class="sl it" style="left:14.4px;top:285.20px"><span class="st"><span class="pn">color</span><span class="sm">: -internal-light-dark-color(<span class="sw" style="background:#000"></span>black,</span></span></div><div class="sl it" style="left:27.9px;top:294.20px"><span class="st"><span class="sm"><span class="sw" style="background:#fff"></span>white);</span></span></div><div class="sl it" style="left:14.4px;top:303.50px"><span class="pn">letter-spacing</span><span class="sm">: normal;</span></div><div class="sl it" style="left:14.4px;top:312.50px"><span class="pn">word-spacing</span><span class="sm">: normal;</span></div><div class="sl it" style="left:14.4px;top:321.60px"><span class="pn">text-transform</span><span class="sm">: none;</span></div><div class="sl it" style="left:14.4px;top:330.70px"><span class="pn">text-indent</span><span class="sm">: 0px;</span></div><div class="sl it" style="left:14.4px;top:339.80px"><span class="pn">text-shadow</span><span class="sm">: none;</span></div><div class="sl it" style="left:14.4px;top:348.90px"><span class="st"><span class="pn">display</span><span class="sm">: inline-block;</span></span></div><div class="sl it" style="left:14.4px;top:358.20px"><span class="pn">text-align</span><span class="sm">: start;</span></div><div class="sl it" style="left:14.4px;top:367.20px"><span class="pn">-webkit-appearance</span><span class="sm">: textfield;</span></div><div class="sl it" style="left:14.4px;top:376.50px"><span class="st"><span class="pn">background-color</span><span class="sm">: -internal-light-dark-</span></span></div><div class="sl it" style="left:27.9px;top:385.70px"><span class="st"><span class="sm">color(<span class="sw" style="background:#fff"></span>white, <span class="sw" style="background:#000"></span>black);</span></span></div><div class="sl it" style="left:14.4px;top:394.80px"><span class="pn">-webkit-rtl-ordering</span><span class="sm">: logical;</span></div><div class="sl it" style="left:14.4px;top:404.00px"><span class="pn">cursor</span><span class="sm">: text;</span></div><div class="sl it" style="left:14.4px;top:412.80px"><span class="st"><span class="pn">margin</span><span class="sm">:<span class="tri"></span> 0em;</span></span></div><div class="sl it" style="left:14.4px;top:422.10px"><span class="pn">font</span><span class="sm">:<span class="tri"></span> 400 13.3333px Arial;</span></div><div class="sl it" style="left:14.4px;top:431.40px"><span class="st"><span class="pn">padding</span><span class="sm">:<span class="tri"></span> 1px 0px;</span></span></div><div class="sl it" style="left:14.4px;top:440.50px"><span class="st"><span class="pn">border-width</span><span class="sm">:<span class="tri"></span> 2px;</span></span></div></div>
</body></html>
